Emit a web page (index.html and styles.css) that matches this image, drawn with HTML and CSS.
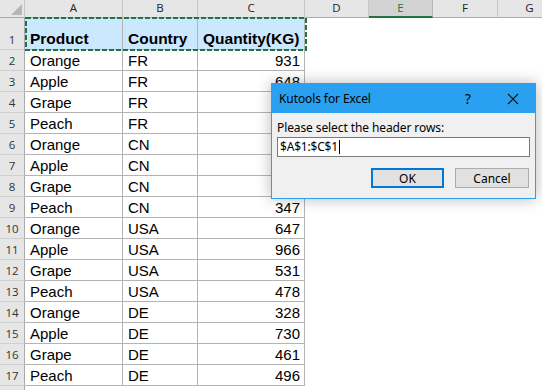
FILE: index.html
```html
<!DOCTYPE html>
<html>
<head>
<meta charset="utf-8">
<link rel="stylesheet" href="styles.css">
</head>
<body>
<div class="sheet">
  <div class="grid">
    <div class="corner"><svg width="25" height="18" viewBox="0 0 25 18"><polygon points="22,4 22,15 11,15" fill="#b5b5b5"/></svg></div>
    <div class="colh">A</div>
    <div class="colh">B</div>
    <div class="colh">C</div>
    <div class="colh">D</div>
    <div class="colh sel">E</div>
    <div class="colh">F</div>
    <div class="colh">G</div>

    <div class="rowh">1</div>
    <div class="cell head">Product</div>
    <div class="cell head">Country</div>
    <div class="cell head">Quantity(KG)</div>
    <div class="empty"></div>

    <div class="rowh">2</div><div class="cell">Orange</div><div class="cell">FR</div><div class="cell num">931</div><div class="empty"></div>
    <div class="rowh">3</div><div class="cell">Apple</div><div class="cell">FR</div><div class="cell num">648</div><div class="empty"></div>
    <div class="rowh">4</div><div class="cell">Grape</div><div class="cell">FR</div><div class="cell num"></div><div class="empty"></div>
    <div class="rowh">5</div><div class="cell">Peach</div><div class="cell">FR</div><div class="cell num"></div><div class="empty"></div>
    <div class="rowh">6</div><div class="cell">Orange</div><div class="cell">CN</div><div class="cell num"></div><div class="empty"></div>
    <div class="rowh">7</div><div class="cell">Apple</div><div class="cell">CN</div><div class="cell num"></div><div class="empty"></div>
    <div class="rowh">8</div><div class="cell">Grape</div><div class="cell">CN</div><div class="cell num"></div><div class="empty"></div>
    <div class="rowh">9</div><div class="cell">Peach</div><div class="cell">CN</div><div class="cell num">347</div><div class="empty"></div>
    <div class="rowh">10</div><div class="cell">Orange</div><div class="cell">USA</div><div class="cell num">647</div><div class="empty"></div>
    <div class="rowh">11</div><div class="cell">Apple</div><div class="cell">USA</div><div class="cell num">966</div><div class="empty"></div>
    <div class="rowh">12</div><div class="cell">Grape</div><div class="cell">USA</div><div class="cell num">531</div><div class="empty"></div>
    <div class="rowh">13</div><div class="cell">Peach</div><div class="cell">USA</div><div class="cell num">478</div><div class="empty"></div>
    <div class="rowh">14</div><div class="cell">Orange</div><div class="cell">DE</div><div class="cell num">328</div><div class="empty"></div>
    <div class="rowh">15</div><div class="cell">Apple</div><div class="cell">DE</div><div class="cell num">730</div><div class="empty"></div>
    <div class="rowh">16</div><div class="cell">Grape</div><div class="cell">DE</div><div class="cell num">461</div><div class="empty"></div>
    <div class="rowh">17</div><div class="cell">Peach</div><div class="cell">DE</div><div class="cell num">496</div><div class="empty"></div>
    <div class="rowh last"></div><div class="lastrow"></div>
  </div>

  <svg class="marquee" width="282" height="34" viewBox="0 0 282 34">
    <rect x="1" y="1" width="280" height="32" fill="none" stroke="#217346" stroke-width="2" stroke-dasharray="5 2"/>
  </svg>

  <div class="dialog">
    <div class="titlebar">
      <span class="title">Kutools for Excel</span>
      <span class="help">?</span>
      <span class="close"><svg width="12" height="12" viewBox="0 0 12 12"><path d="M1 1 L11 11 M11 1 L1 11" stroke="#111" stroke-width="1.1" fill="none"/></svg></span>
    </div>
    <div class="dbody">
      <div class="label">Please select the header rows:</div>
      <div class="input">$A$1:$C$1<span class="caret"></span></div>
      <div class="buttons">
        <div class="btn ok">OK</div>
        <div class="btn">Cancel</div>
      </div>
    </div>
  </div>
</div>
</body>
</html>
```

FILE: styles.css
```css
html, body {
  margin: 0;
  padding: 0;
  background: #fff;
}
.sheet {
  position: relative;
  width: 542px;
  height: 390px;
  overflow: hidden;
}
.grid {
  display: grid;
  grid-template-columns: 25px 98px 75px 107px 64px 64px 65px 64px;
  grid-template-rows: 18px 32px repeat(16, 21px) 20px;
  width: 562px;
}
.grid > div {
  box-sizing: border-box;
}
.corner {
  background: #e6e6e6;
  border-right: 1px solid #c6c6c6;
  border-bottom: 1px solid #ababab;
}
.corner svg { display: block; }
.colh {
  background: #e6e6e6;
  border-right: 1px solid #c6c6c6;
  border-bottom: 1px solid #ababab;
  font-family: "Open Sans", "Noto Sans", sans-serif;
  font-size: 11.5px;
  color: #222;
  display: flex;
  align-items: center;
  justify-content: center;
  line-height: 1;
  padding-bottom: 1px;
}
.colh.sel {
  background: #d3d3d3;
  color: #217346;
  border-bottom: 2px solid #217346;
  border-right: 1px solid #b8b8b8;
}
.rowh {
  background: #e6e6e6;
  border-right: 1px solid #ababab;
  border-bottom: 1px solid #d0d0d0;
  font-family: "Open Sans", "Noto Sans", sans-serif;
  font-size: 11.5px;
  color: #333;
  display: flex;
  align-items: flex-end;
  justify-content: center;
  line-height: 1;
  padding-bottom: 4px;
}
.cell {
  border-right: 1px solid #b4b4b4;
  border-bottom: 1px solid #b4b4b4;
  font-family: "Liberation Sans", Arial, sans-serif;
  font-size: 15px;
  color: #000;
  display: flex;
  align-items: flex-end;
  padding: 0 4px 1px 5px;
  line-height: 17px;
  white-space: nowrap;
  overflow: hidden;
}
.cell.head {
  background: #cce8ff;
  font-weight: bold;
  font-size: 15.5px;
  padding-bottom: 2px;
}
.cell.num {
  justify-content: flex-end;
  padding-right: 4px;
}
.empty {
  grid-column: span 4;
}
.lastrow {
  grid-column: span 7;
}
.marquee {
  position: absolute;
  left: 25px;
  top: 17px;
  display: block;
}
.dialog {
  position: absolute;
  left: 271px;
  top: 83px;
  width: 265px;
  height: 116px;
  box-sizing: border-box;
  border: 1px solid #2aa1f0;
  background: #f0f0f0;
  box-shadow: 0 0 14px rgba(0,0,0,0.28);
  font-family: "Noto Sans", "Open Sans", sans-serif;
  display: flex;
  flex-direction: column;
}
.titlebar {
  height: 29px;
  background: #2aa1f0;
  display: flex;
  align-items: center;
  padding-left: 7px;
  color: #000;
  font-size: 12px;
}
.title {
  flex: 1;
  letter-spacing: -0.1px;
}
.help {
  font-size: 13.5px;
  width: 14px;
  margin-right: 32px;
  text-align: center;
}
.close {
  width: 12px;
  height: 12px;
  margin-right: 16px;
}
.close svg { display: block; }
.dbody {
  flex: 1;
  padding: 7px 5px 0 5px;
  display: flex;
  flex-direction: column;
}
.label {
  font-size: 12px;
  line-height: 16px;
  color: #000;
  letter-spacing: -0.1px;
}
.input {
  margin-top: 1px;
  height: 20px;
  box-sizing: border-box;
  background: #fff;
  border: 1px solid #7a7a7a;
  font-size: 12px;
  line-height: 18px;
  padding-left: 2px;
  display: flex;
  align-items: center;
  letter-spacing: -0.2px;
}
.caret {
  width: 1px;
  height: 14px;
  background: #000;
  margin-left: 1px;
}
.buttons {
  margin-top: 11px;
  display: flex;
  justify-content: flex-end;
  gap: 11px;
  padding-right: 1px;
}
.btn {
  width: 74px;
  height: 20px;
  box-sizing: border-box;
  background: #e1e1e1;
  border: 1px solid #adadad;
  font-size: 12px;
  display: flex;
  align-items: center;
  justify-content: center;
  color: #000;
}
.btn.ok {
  width: 73px;
  border: 2px solid #0078d7;
}
```
